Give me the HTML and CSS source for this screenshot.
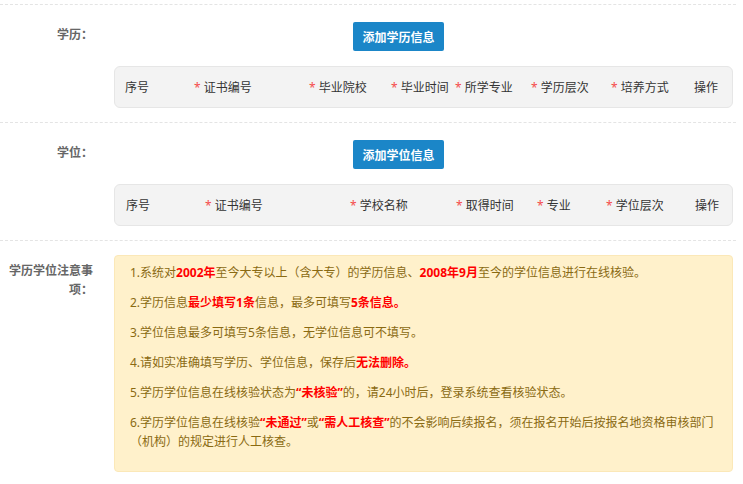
FILE: index.html
```html
<!DOCTYPE html>
<html lang="zh-CN">
<head>
  <meta charset="UTF-8" />
  <meta name="viewport" content="width=device-width, initial-scale=1.0"/>
  <title>学历学位信息</title>
  <link rel="stylesheet" href="styles.css">
</head>
<body>
  <div class="form">
    <!-- 学历 -->
    <div class="form-row">
      <div class="form-label">学历<span class="colon">：</span></div>
      <div class="form-content">
        <div class="btn-line">
          <button class="add-button">添加学历信息</button>
        </div>
        <div class="table-head cols-xueli">
          <span>序号</span>
          <span><i class="req">*</i> 证书编号</span>
          <span><i class="req">*</i> 毕业院校</span>
          <span><i class="req">*</i> 毕业时间</span>
          <span><i class="req">*</i> 所学专业</span>
          <span><i class="req">*</i> 学历层次</span>
          <span><i class="req">*</i> 培养方式</span>
          <span>操作</span>
        </div>
      </div>
    </div>

    <!-- 学位 -->
    <div class="form-row">
      <div class="form-label">学位<span class="colon">：</span></div>
      <div class="form-content">
        <div class="btn-line">
          <button class="add-button">添加学位信息</button>
        </div>
        <div class="table-head cols-xuewei">
          <span>序号</span>
          <span><i class="req">*</i> 证书编号</span>
          <span><i class="req">*</i> 学校名称</span>
          <span><i class="req">*</i> 取得时间</span>
          <span><i class="req">*</i> 专业</span>
          <span><i class="req">*</i> 学位层次</span>
          <span>操作</span>
        </div>
      </div>
    </div>

    <!-- 注意事项 -->
    <div class="form-row notice-row">
      <div class="form-label">学历学位注意事项<span class="colon">：</span></div>
      <div class="form-content">
        <div class="notice">
          <p>1.系统对<b>2002年</b>至今大专以上（含大专）的学历信息、<b>2008年9月</b>至今的学位信息进行在线核验。</p>
          <p>2.学历信息<b>最少填写1条</b>信息，最多可填写<b>5条信息。</b></p>
          <p>3.学位信息最多可填写5条信息，无学位信息可不填写。</p>
          <p>4.请如实准确填写学历、学位信息，保存后<b>无法删除。</b></p>
          <p>5.学历学位信息在线核验状态为<b>“未核验”</b>的，请24小时后，登录系统查看核验状态。</p>
          <p>6.学历学位信息在线核验<b>“未通过”</b>或<b>“需人工核查”</b>的不会影响后续报名，须在报名开始后按报名地资格审核部门（机构）的规定进行人工核查。</p>
        </div>
      </div>
    </div>
  </div>
</body>
</html>
```

FILE: styles.css
```css
body {
  margin: 0;
  background-color: #fff;
  font-family: "Noto Sans", "Noto Sans CJK SC", sans-serif;
  font-size: 12px;
  color: #333;
}

.form {
  width: 736px;
  padding-top: 4px;
}

.form-row {
  display: flex;
  border-top: 1px dashed #e4e4e4;
  padding-bottom: 14px;
}

.form-label {
  width: 93px;
  flex: none;
  margin-right: 21px;
  padding-top: 20px;
  text-align: right;
  font-weight: bold;
  color: #666;
  line-height: 18px;
}

.colon {
  font-family: "Noto Sans CJK TC", sans-serif;
}

.form-content {
  width: 619px;
}

.btn-line {
  padding: 17px 0 15px 239px;
}

.add-button {
  width: 91px;
  height: 29px;
  padding: 0;
  border: none;
  border-radius: 2px;
  background-color: #1b86c8;
  color: #fff;
  font-family: inherit;
  font-size: 12px;
  font-weight: bold;
  cursor: pointer;
}

.table-head {
  display: grid;
  align-items: center;
  height: 40px;
  border: 1px solid #e6e6e6;
  border-radius: 6px;
  background-color: #f3f3f3;
  white-space: nowrap;
}

.cols-xueli {
  padding-left: 10px;
  grid-template-columns: 69px 115px 82px 64px 76px 80px 83px auto;
}

.cols-xuewei {
  padding-left: 11px;
  grid-template-columns: 79px 145px 106px 81px 69px 89px auto;
}

.req {
  font-style: normal;
  color: #f54b4b;
}

.notice-row {
  padding-bottom: 0;
}

.notice-row .form-label {
  padding-top: 21px;
}

.notice {
  margin-top: 14px;
  padding: 7px 15px 20px 15px;
  border: 1px solid #fbe8b8;
  border-radius: 4px;
  background-color: #fff1cb;
  color: #8a6a12;
  line-height: 19px;
}

.notice p {
  margin: 0 0 11px 0;
}

.notice p:last-child {
  margin-bottom: 0;
}

.notice b {
  color: #ff0000;
}
```
